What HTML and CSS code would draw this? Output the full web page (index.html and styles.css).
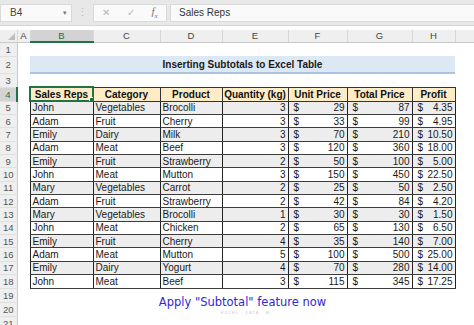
FILE: index.html
```html
<!DOCTYPE html>
<html lang="en">
<head>
    <meta charset="UTF-8">
    <title>Inserting Subtotals to Excel Table</title>
    <link rel="stylesheet" href="styles.css">
</head>
<body>
    <div class="formula-bar">
        <div class="name-box">
            <span>B4</span>
            <span class="caret">&#9662;</span>
        </div>
        <div class="grip">&#8942;</div>
        <div class="fx-buttons">
            <span>&#10005;</span>
            <span>&#10003;</span>
            <span class="fx">f<sub>x</sub></span>
        </div>
        <div class="formula-input">Sales Reps</div>
    </div>

    <table class="sheet">
        <colgroup>
            <col class="c-rh"><col class="c-a"><col class="c-b"><col class="c-c"><col class="c-d">
            <col class="c-e"><col class="c-f"><col class="c-g"><col class="c-h"><col class="c-i">
        </colgroup>
        <tr class="col-heads">
            <th class="corner"><span class="tri"></span></th>
            <th>A</th><th class="active">B</th><th>C</th><th>D</th><th>E</th><th>F</th><th>G</th><th>H</th><th></th>
        </tr>
        <tr class="r-1"><th class="rh">1</th><td colspan="9"></td></tr>
        <tr class="r-2"><th class="rh">2</th><td></td><td class="title" colspan="7">Inserting Subtotals to Excel Table</td><td></td></tr>
        <tr class="r-3"><th class="rh">3</th><td colspan="9"></td></tr>
        <tr class="r-4 head">
            <th class="rh active">4</th><td></td>
            <td class="selected">Sales Reps</td><td>Category</td><td>Product</td><td>Quantity (kg)</td>
            <td>Unit Price</td><td>Total Price</td><td>Profit</td><td class="blank"></td>
        </tr>
        <tr class="row odd"><th class="rh">5</th><td class="blank"></td><td>John</td><td>Vegetables</td><td>Brocolli</td><td class="num">3</td><td class="num"><span class="cur">$</span>29</td><td class="num"><span class="cur">$</span>87</td><td class="num"><span class="cur">$</span>4.35</td><td class="blank"></td></tr>
        <tr class="row"><th class="rh">6</th><td class="blank"></td><td>Adam</td><td>Fruit</td><td>Cherry</td><td class="num">3</td><td class="num"><span class="cur">$</span>33</td><td class="num"><span class="cur">$</span>99</td><td class="num"><span class="cur">$</span>4.95</td><td class="blank"></td></tr>
        <tr class="row odd"><th class="rh">7</th><td class="blank"></td><td>Emily</td><td>Dairy</td><td>Milk</td><td class="num">3</td><td class="num"><span class="cur">$</span>70</td><td class="num"><span class="cur">$</span>210</td><td class="num"><span class="cur">$</span>10.50</td><td class="blank"></td></tr>
        <tr class="row"><th class="rh">8</th><td class="blank"></td><td>Adam</td><td>Meat</td><td>Beef</td><td class="num">3</td><td class="num"><span class="cur">$</span>120</td><td class="num"><span class="cur">$</span>360</td><td class="num"><span class="cur">$</span>18.00</td><td class="blank"></td></tr>
        <tr class="row odd"><th class="rh">9</th><td class="blank"></td><td>Emily</td><td>Fruit</td><td>Strawberry</td><td class="num">2</td><td class="num"><span class="cur">$</span>50</td><td class="num"><span class="cur">$</span>100</td><td class="num"><span class="cur">$</span>5.00</td><td class="blank"></td></tr>
        <tr class="row"><th class="rh">10</th><td class="blank"></td><td>John</td><td>Meat</td><td>Mutton</td><td class="num">3</td><td class="num"><span class="cur">$</span>150</td><td class="num"><span class="cur">$</span>450</td><td class="num"><span class="cur">$</span>22.50</td><td class="blank"></td></tr>
        <tr class="row odd"><th class="rh">11</th><td class="blank"></td><td>Mary</td><td>Vegetables</td><td>Carrot</td><td class="num">2</td><td class="num"><span class="cur">$</span>25</td><td class="num"><span class="cur">$</span>50</td><td class="num"><span class="cur">$</span>2.50</td><td class="blank"></td></tr>
        <tr class="row"><th class="rh">12</th><td class="blank"></td><td>Adam</td><td>Fruit</td><td>Strawberry</td><td class="num">2</td><td class="num"><span class="cur">$</span>42</td><td class="num"><span class="cur">$</span>84</td><td class="num"><span class="cur">$</span>4.20</td><td class="blank"></td></tr>
        <tr class="row odd"><th class="rh">13</th><td class="blank"></td><td>Mary</td><td>Vegetables</td><td>Brocolli</td><td class="num">1</td><td class="num"><span class="cur">$</span>30</td><td class="num"><span class="cur">$</span>30</td><td class="num"><span class="cur">$</span>1.50</td><td class="blank"></td></tr>
        <tr class="row"><th class="rh">14</th><td class="blank"></td><td>John</td><td>Meat</td><td>Chicken</td><td class="num">2</td><td class="num"><span class="cur">$</span>65</td><td class="num"><span class="cur">$</span>130</td><td class="num"><span class="cur">$</span>6.50</td><td class="blank"></td></tr>
        <tr class="row odd"><th class="rh">15</th><td class="blank"></td><td>Emily</td><td>Fruit</td><td>Cherry</td><td class="num">4</td><td class="num"><span class="cur">$</span>35</td><td class="num"><span class="cur">$</span>140</td><td class="num"><span class="cur">$</span>7.00</td><td class="blank"></td></tr>
        <tr class="row"><th class="rh">16</th><td class="blank"></td><td>Adam</td><td>Meat</td><td>Mutton</td><td class="num">5</td><td class="num"><span class="cur">$</span>100</td><td class="num"><span class="cur">$</span>500</td><td class="num"><span class="cur">$</span>25.00</td><td class="blank"></td></tr>
        <tr class="row odd"><th class="rh">17</th><td class="blank"></td><td>Emily</td><td>Dairy</td><td>Yogurt</td><td class="num">4</td><td class="num"><span class="cur">$</span>70</td><td class="num"><span class="cur">$</span>280</td><td class="num"><span class="cur">$</span>14.00</td><td class="blank"></td></tr>
        <tr class="row"><th class="rh">18</th><td class="blank"></td><td>John</td><td>Meat</td><td>Beef</td><td class="num">3</td><td class="num"><span class="cur">$</span>115</td><td class="num"><span class="cur">$</span>345</td><td class="num"><span class="cur">$</span>17.25</td><td class="blank"></td></tr>
        <tr class="r-19"><th class="rh">19</th><td></td><td class="note" colspan="7" rowspan="2"><span class="note-text">Apply "Subtotal" feature now<span class="mark">EXCEL · DATA · BI</span></span></td><td></td></tr>
        <tr class="r-20"><th class="rh">20</th><td></td><td></td></tr>
        <tr class="r-21"><th class="rh">21</th><td colspan="9"></td></tr>
    </table>
</body>
</html>
```

FILE: styles.css
```css
/* page */
* {
    box-sizing: border-box;
}

body {
    margin: 0;
    background-color: #fff;
    font-family: 'Liberation Sans', Arial, sans-serif;
    color: #222;
    overflow: hidden;
}

/* formula bar */
.formula-bar {
    display: flex;
    align-items: center;
    height: 26px;
    background-color: #e8e8e8;
    border-bottom: 1px solid #d6d6d6;
    margin-bottom: 4px;
    font-size: 10px;
    color: #444;
}

.name-box {
    display: flex;
    justify-content: space-between;
    align-items: center;
    width: 72px;
    height: 18px;
    padding: 0 4px 0 9px;
    background-color: #fafafa;
    border: 1px solid #dadada;
}

.caret {
    font-size: 7px;
    color: #777;
}

.grip {
    width: 21px;
    text-align: center;
    color: #b9b9b9;
    font-size: 11px;
}

.fx-buttons {
    display: flex;
    align-items: center;
    justify-content: space-around;
    width: 74px;
    height: 18px;
    background-color: #fafafa;
    border: 1px solid #dadada;
    color: #b4b4b4;
    font-size: 10px;
}

.fx-buttons .fx {
    font-family: 'Liberation Serif', serif;
    font-style: italic;
    color: #777;
    font-size: 11px;
}

.fx-buttons .fx sub {
    font-size: 7px;
}

.formula-input {
    flex: 1;
    height: 18px;
    margin-left: 3px;
    padding: 2px 8px;
    background-color: #fafafa;
    border: 1px solid #dadada;
    border-right: none;
    color: #333;
}

/* sheet grid */
.sheet {
    table-layout: fixed;
    width: 485px;
    border-collapse: collapse;
    font-size: 10px;
}

.c-rh { width: 17px; }
.c-a { width: 13px; }
.c-b { width: 63px; }
.c-c { width: 67px; }
.c-d { width: 62px; }
.c-e { width: 66px; }
.c-f { width: 59px; }
.c-g { width: 65px; }
.c-h { width: 43px; }
.c-i { width: 30px; }

td, th {
    padding: 0;
    white-space: nowrap;
    overflow: hidden;
}

.col-heads th {
    height: 12px;
    background-color: #efefef;
    border-right: 1px solid #d8d8d8;
    border-bottom: 1px solid #c8c8c8;
    font-weight: normal;
    font-size: 9.5px;
    color: #444;
}

.col-heads th.active {
    background-color: #d3d3d3;
    color: #217346;
    border-bottom: 2px solid #217346;
}

.corner {
    position: relative;
}

.tri {
    position: absolute;
    right: 2px;
    bottom: 2px;
    width: 0;
    height: 0;
    border-left: 7px solid transparent;
    border-bottom: 7px solid #bdbdbd;
}

.rh {
    background-color: #efefef;
    border-right: 1px solid #c8c8c8;
    border-bottom: 1px solid #e0e0e0;
    font-weight: normal;
    font-size: 9.5px;
    color: #555;
    text-align: center;
}

.rh.active {
    background-color: #d3d3d3;
    color: #217346;
    border-right: 2px solid #217346;
}

.r-1 { height: 14px; }
.r-2 { height: 17px; }
.r-3 { height: 14px; }
.r-4 { height: 14px; }
.row { height: 13.36px; }
.r-19 { height: 14px; }
.r-20 { height: 14px; }
.r-21 { height: 14px; }

/* title band */
.title {
    background-color: #dde8f5;
    border-bottom: 2px solid #a9c3e3;
    text-align: center;
    font-weight: bold;
    color: #1a1a1a;
}

/* data table */
.head td {
    background-color: #fdecc6;
    border: 1px solid #333;
    font-weight: bold;
    text-align: center;
    color: #111;
}

.head td:nth-child(2),
.head td.blank {
    background-color: transparent;
    border: none;
}

.row td {
    border: 1px solid #3c3c3c;
    border-left-color: #222;
    border-right-color: #222;
    padding: 0 2px;
    color: #1a1a1a;
}

.row.odd td {
    background-color: #ededed;
}

.row td.blank {
    border: none;
    background-color: transparent;
}

.row td.num {
    text-align: right;
}

.cur {
    float: left;
    padding-left: 3px;
}

.selected {
    position: relative;
    outline: 2px solid #217346;
    outline-offset: -1px;
}

.selected::after {
    content: "";
    position: absolute;
    right: -3px;
    bottom: -3px;
    width: 5px;
    height: 5px;
    background-color: #217346;
    border: 1px solid #fff;
}

/* note */
.note {
    text-align: center;
    vertical-align: middle;
}

.note-text {
    position: relative;
    font-family: 'Comic Sans MS', 'DejaVu Sans', sans-serif;
    font-size: 11.5px;
    color: #3128d0;
}

.mark {
    position: absolute;
    left: 62px;
    top: 15px;
    font-family: 'Liberation Sans', sans-serif;
    font-size: 4px;
    letter-spacing: 1px;
    color: #c9c9d6;
}
```
